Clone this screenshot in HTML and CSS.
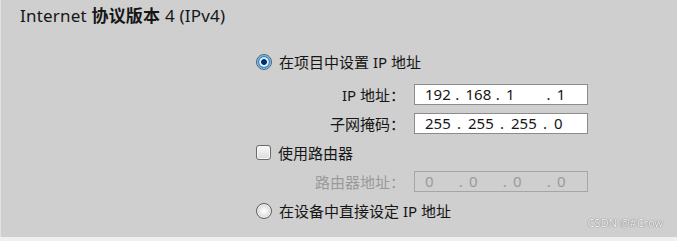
FILE: index.html
```html
<!DOCTYPE html>
<html lang="zh">

<head>
    <meta charset="UTF-8">
    <title>Internet 协议版本 4 (IPv4)</title>
    <link rel="stylesheet" href="styles.css">
</head>

<body>
    <div class="panel">
        <div class="panel-title">Internet <b>协议版本</b> 4 (IPv4)</div>

        <div class="form">
            <div class="row row-first">
                <span class="radio checked"></span>
                <span class="option-text">在项目中设置 IP 地址</span>
            </div>
            <div class="row">
                <span class="field-label">IP 地址：</span>
                <div class="ip-box">
                    <span class="oct">192</span><span class="dot">.</span>
                    <span class="oct">168</span><span class="dot">.</span>
                    <span class="oct wide">1</span><span class="dot">.</span>
                    <span class="oct">1</span>
                </div>
            </div>
            <div class="row">
                <span class="field-label">子网掩码：</span>
                <div class="ip-box">
                    <span class="oct">255</span><span class="dot">.</span>
                    <span class="oct">255</span><span class="dot">.</span>
                    <span class="oct">255</span><span class="dot">.</span>
                    <span class="oct">0</span>
                </div>
            </div>
            <div class="row">
                <span class="checkbox"></span>
                <span class="option-text">使用路由器</span>
            </div>
            <div class="row disabled">
                <span class="field-label">路由器地址：</span>
                <div class="ip-box">
                    <span class="oct zero">0</span><span class="dot">.</span>
                    <span class="oct zero">0</span><span class="dot">.</span>
                    <span class="oct zero">0</span><span class="dot">.</span>
                    <span class="oct">0</span>
                </div>
            </div>
            <div class="row">
                <span class="radio"></span>
                <span class="option-text">在设备中直接设定 IP 地址</span>
            </div>
        </div>

        <div class="watermark">CSDN @#Crow</div>
    </div>
</body>

</html>
```

FILE: styles.css
```css
:root {
    --panel-bg: #cfcfcf;
    --page-bg: #f0f0f0;
    --text-color: #161616;
    --muted-color: #9a9a9a;
}

body {
    margin: 0;
    background-color: var(--page-bg);
    font-family: "Noto Sans", "Noto Sans CJK SC", sans-serif;
    color: var(--text-color);
}

.panel {
    position: relative;
    width: 676px;
    height: 237px;
    background-color: var(--panel-bg);
    border-left: 1px solid #e2e2e2;
}

.panel-title {
    padding: 5px 0 0 19px;
    height: 22px;
    font-size: 17px;
    line-height: 22px;
    letter-spacing: 0.2px;
}

.panel-title b {
    font-weight: bold;
}

.form {
    margin: 20px 0 0 255px;
    font-size: 15px;
}

.row {
    display: flex;
    align-items: center;
    height: 29px;
}

.row-first {
    margin-bottom: 4px;
}

.option-text {
    margin-left: 7px;
    line-height: 20px;
}

.radio {
    width: 14px;
    height: 14px;
    border-radius: 50%;
    border: 1px solid #5e5e5e;
    background: radial-gradient(circle, #ffffff 0, #f2f2f2 3px, #cfcfcf 7px);
    box-shadow: inset 0 0 0 1px #f4f4f4;
}

.radio.checked {
    border-color: #55606a;
    background: radial-gradient(circle, #082c64 0, #082c64 2.5px, #e6f3fb 3.3px, #d4ebf8 4.3px, #2f86cc 5.3px, #63b3e6 6.3px, #a9d7f1 7px);
    box-shadow: none;
}

.checkbox {
    width: 13px;
    height: 13px;
    border-radius: 3px;
    border: 1px solid #6a6a6a;
    background: linear-gradient(#fbfbfb, #dadada);
    box-shadow: inset 0 0 0 1px #f6f6f6;
}

.field-label {
    width: 149px;
    text-align: right;
}

.ip-box {
    display: flex;
    align-items: center;
    box-sizing: border-box;
    width: 174px;
    height: 21px;
    margin-left: 9px;
    padding-left: 10px;
    background-color: #ffffff;
    border: 1px solid #8c8c8c;
    font-size: 15px;
    line-height: 19px;
}

.oct {
    width: 32px;
}

.oct.wide {
    width: 43px;
}

.oct.zero {
    width: 36px;
}

.dot {
    width: 11px;
}

.disabled .field-label {
    color: var(--muted-color);
}

.disabled .ip-box {
    background-color: var(--panel-bg);
    border-color: #a6a6a6;
    color: var(--muted-color);
}

.watermark {
    position: absolute;
    right: 14px;
    bottom: 7px;
    font-size: 11px;
    color: #f4f4f4;
    text-shadow: 0 0 1px #6f6f6f, 0 0 1px #8a8a8a;
}
```
